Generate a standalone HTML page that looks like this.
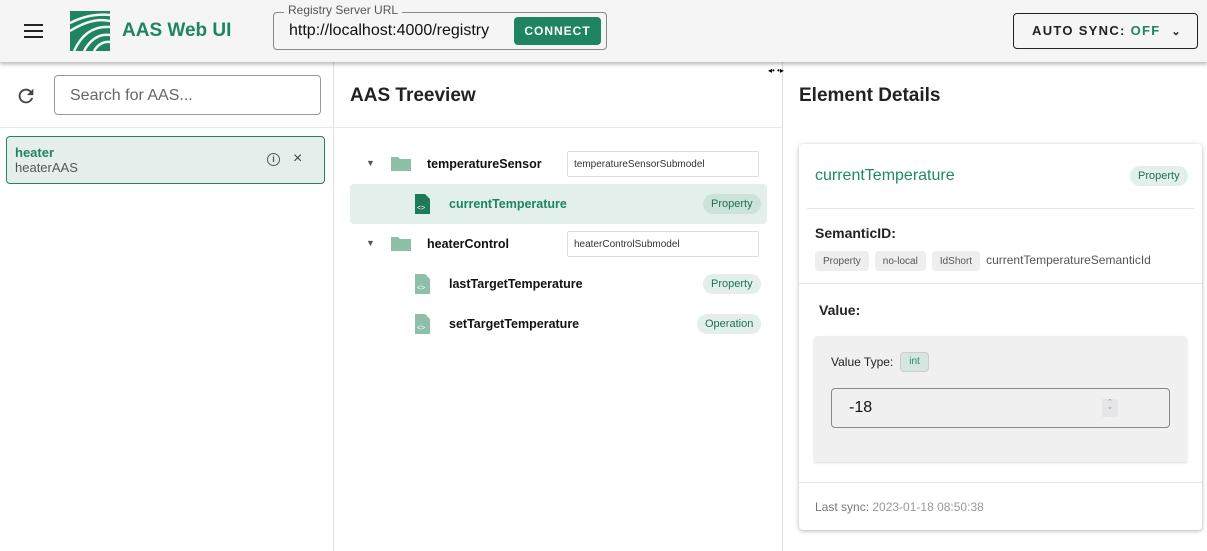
<!DOCTYPE html><html><head><style>
*{box-sizing:border-box;margin:0;padding:0}
body{width:1207px;height:551px;overflow:hidden;font-family:"Liberation Sans",Roboto,sans-serif;background:#fff;color:#000;position:relative}
.abs{position:absolute}
.hdr{left:0;top:0;width:1207px;height:62px;background:#f5f5f5;box-shadow:0 2px 4px rgba(0,0,0,.3);z-index:2}
.g{color:#1f8461}
.chip{position:absolute;border-radius:11px;background:#e3efeb;color:#1f6f55;font-size:11px;height:20px;line-height:21px;padding:0 8px}
.tb{position:absolute;font-size:12.5px;font-weight:bold;color:#111}
.sub{position:absolute;border:1px solid #ddd;font-size:10px;color:#333;height:26px;line-height:25px;padding-left:6px;width:192px;border-radius:2px}
.gchip{display:inline-block;background:#eee;border-radius:4px;font-size:10px;color:#555;height:20px;line-height:21px;padding:0 8px;margin-right:6px}
</style></head><body>
<div class="abs hdr">
 <div class="abs" style="left:24px;top:24px;width:19px;height:2px;background:#222;box-shadow:0 6px 0 #222,0 12px 0 #222"></div>
 <svg class="abs" style="left:70px;top:11px" width="40" height="40" viewBox="0 0 40 40"><rect width="40" height="40" fill="#1f8461"/><path d="M0 12 Q20 2 40 4 M0 20 Q22 6 40 10 M4 40 Q16 14 40 16 M14 40 Q24 22 40 24 M24 40 Q30 30 40 31" stroke="#f5f5f5" stroke-width="2.5" fill="none"/></svg>
 <div class="abs g" style="left:122px;top:20px;font-size:19px;font-weight:bold">AAS Web UI</div>
 <div class="abs" style="left:273px;top:12px;width:334px;height:38px;border:1px solid #888;border-radius:4px"></div>
 <div class="abs" style="left:284px;top:3px;background:#f5f5f5;padding:0 4px;font-size:12px;color:#555">Registry Server URL</div>
 <div class="abs" style="left:289px;top:22px;font-size:16px;color:#111">http://localhost:4000/registry</div>
 <div class="abs" style="left:514px;top:17px;width:87px;height:28px;background:#1f8461;border-radius:4px;color:#fff;font-size:12px;font-weight:bold;text-align:center;line-height:28px;letter-spacing:1px">CONNECT</div>
 <div class="abs" style="left:1013px;top:13px;width:185px;height:36px;border:1px solid #222;border-radius:4px;font-size:13px;font-weight:bold;letter-spacing:1.3px;line-height:34px;padding-left:18px;color:#222">AUTO SYNC: <span class="g">OFF</span> <span style="font-size:11px;margin-left:6px">&#8964;</span></div>
</div>
<div class="abs" style="left:333px;top:62px;width:1px;height:489px;background:#e0e0e0"></div>
<div class="abs" style="left:782px;top:62px;width:1px;height:489px;background:#e0e0e0"></div>
<div class="abs" style="left:0;top:127px;width:782px;height:1px;background:#e8e8e8"></div>
<div class="abs" style="left:768px;top:66px;font-size:8px">◂•&nbsp;•▸</div>
<svg class="abs" style="left:15px;top:85px" width="22" height="22" viewBox="0 0 24 24"><path d="M17.65 6.35A8 8 0 1 0 19.73 14h-2.08A6 6 0 1 1 12 6c1.66 0 3.14.69 4.22 1.78L13 11h7V4z" fill="#444"/></svg>
<div class="abs" style="left:54px;top:75px;width:267px;height:40px;border:1px solid #999;border-radius:4px;font-size:16px;color:#666;padding:11px 0 0 15px">Search for AAS...</div>
<div class="abs" style="left:6px;top:136px;width:319px;height:48px;border:1px solid #1f8461;border-radius:4px;background:#e6eeeb"></div>
<div class="abs g" style="left:15px;top:145px;font-size:13px;font-weight:bold">heater</div>
<div class="abs" style="left:15px;top:160px;font-size:13px;color:#555">heaterAAS</div>
<div class="abs" style="left:267px;top:153px;width:13px;height:13px;border:1.5px solid #555;border-radius:50%;font-size:9px;text-align:center;line-height:10px;color:#555;font-weight:bold">i</div>
<div class="abs" style="left:293px;top:150px;font-size:16px;color:#444">×</div>
<div class="abs" style="left:350px;top:85px;font-size:19px;font-weight:bold;color:#222">AAS Treeview</div>
<div class="abs" style="left:350px;top:184px;width:417px;height:40px;background:#e3efeb;border-radius:4px"></div>
<div class="abs" style="left:366px;top:158px;font-size:9px;color:#555">▼</div>
<div class="abs" style="left:366px;top:238px;font-size:9px;color:#555">▼</div>
<svg class="abs" style="left:391px;top:155px" width="20" height="16"><path d="M0 2h7l2 2h11v12H0z" fill="#8dbfa9"/></svg>
<svg class="abs" style="left:391px;top:235px" width="20" height="16"><path d="M0 2h7l2 2h11v12H0z" fill="#8dbfa9"/></svg>
<div class="tb" style="left:427px;top:157px">temperatureSensor</div>
<div class="tb" style="left:427px;top:237px">heaterControl</div>
<div class="sub" style="left:567px;top:151px">temperatureSensorSubmodel</div>
<div class="sub" style="left:567px;top:231px">heaterControlSubmodel</div>
<svg class="abs" style="left:415px;top:194px" width="15" height="20"><path d="M0 0h10l5 5v15H0z" fill="#1f7a5a"/><text x="2" y="16" font-size="7" fill="#fff">&lt;&gt;</text></svg>
<svg class="abs" style="left:415px;top:274px" width="15" height="20"><path d="M0 0h10l5 5v15H0z" fill="#8dbfa9"/><text x="2" y="16" font-size="7" fill="#fff">&lt;&gt;</text></svg>
<svg class="abs" style="left:415px;top:314px" width="15" height="20"><path d="M0 0h10l5 5v15H0z" fill="#8dbfa9"/><text x="2" y="16" font-size="7" fill="#fff">&lt;&gt;</text></svg>
<div class="tb" style="left:449px;top:197px;color:#1f8461">currentTemperature</div>
<div class="tb" style="left:449px;top:277px">lastTargetTemperature</div>
<div class="tb" style="left:449px;top:317px">setTargetTemperature</div>
<div class="chip" style="left:703px;top:194px;background:#cde3da">Property</div>
<div class="chip" style="left:703px;top:274px">Property</div>
<div class="chip" style="left:697px;top:314px">Operation</div>
<div class="abs" style="left:799px;top:85px;font-size:19px;font-weight:bold;color:#222">Element Details</div>
<div class="abs" style="left:799px;top:144px;width:403px;height:386px;border-radius:4px;box-shadow:0 1px 4px rgba(0,0,0,.3);background:#fff"></div>
<div class="abs" style="left:815px;top:167px;font-size:16px;color:#1f8a6a">currentTemperature</div>
<div class="chip" style="left:1130px;top:166px">Property</div>
<div class="abs" style="left:807px;top:208px;width:387px;height:1px;background:#e5e5e5"></div>
<div class="abs" style="left:815px;top:225px;font-size:14px;font-weight:bold;color:#222">SemanticID:</div>
<div class="abs" style="left:815px;top:251px;font-size:12px;color:#555;white-space:nowrap"><span class="gchip">Property</span><span class="gchip">no-local</span><span class="gchip">IdShort</span>currentTemperatureSemanticId</div>
<div class="abs" style="left:799px;top:283px;width:403px;height:1px;background:#e5e5e5"></div>
<div class="abs" style="left:819px;top:302px;font-size:14px;font-weight:bold;color:#222">Value:</div>
<div class="abs" style="left:814px;top:336px;width:373px;height:126px;background:#f0f0f0;border-radius:4px 4px 0 0;box-shadow:0 1px 2px rgba(0,0,0,.15)"></div>
<div class="abs" style="left:831px;top:355px;font-size:12px;color:#222">Value Type:</div>
<div class="abs" style="left:900px;top:352px;width:29px;height:20px;background:#d6e6e0;border:1px solid #ccc;border-radius:4px;font-size:10px;color:#1f8a6a;text-align:center;line-height:18px">int</div>
<div class="abs" style="left:831px;top:388px;width:339px;height:40px;border:1px solid #888;border-radius:4px;font-size:16px;padding:10px 0 0 17px;color:#111">-18</div>
<div class="abs" style="left:1102px;top:399px;width:16px;height:18px;background:#e6e6ea;font-size:9px;color:#777;text-align:center;line-height:8px">&#710;<br>&#711;</div>
<div class="abs" style="left:799px;top:482px;width:403px;height:1px;background:#e5e5e5"></div>
<div class="abs" style="left:815px;top:500px;font-size:12px;color:#777">Last sync: <span style="color:#999">2023-01-18 08:50:38</span></div>
</body></html>
